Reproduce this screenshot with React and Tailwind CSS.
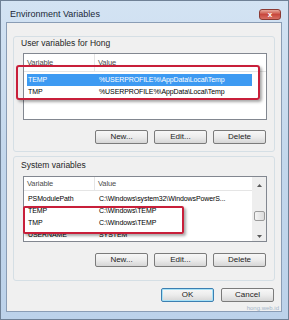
const userRows = [
  { name: 'TEMP', value: '%USERPROFILE%\\AppData\\Local\\Temp', selected: true },
  { name: 'TMP', value: '%USERPROFILE%\\AppData\\Local\\Temp' },
];

const systemRows = [
  { name: 'PSModulePath', value: 'C:\\Windows\\system32\\WindowsPowerS...' },
  { name: 'TEMP', value: 'C:\\Windows\\TEMP' },
  { name: 'TMP', value: 'C:\\Windows\\TEMP' },
  { name: 'USERNAME', value: 'SYSTEM' },
];

function Button({ children, primary }) {
  return (
    <div
      className={`w-[53px] h-[14px] flex items-center justify-center rounded-[2px] border text-[8px] text-[#222] bg-gradient-to-b from-[#f7f7f7] via-[#ececec] to-[#d6d6d6] ${
        primary ? 'border-[#3c7fb1] shadow-[inset_0_0_0_1px_#a8e2f7]' : 'border-[#7b7b7b]'
      }`}
    >
      {children}
    </div>
  );
}

function Arrow({ down }) {
  return (
    <svg width="5" height="3" viewBox="0 0 5 3">
      <path d={down ? 'M0 0 L5 0 L2.5 3 Z' : 'M0 3 L5 3 L2.5 0 Z'} fill="#5a5a5a" />
    </svg>
  );
}

function VarList({ rows, height, scrollbar }) {
  return (
    <div className={`flex border border-[#828790] bg-white text-[7px] tracking-[-0.1px] ${height}`}>
      <div className="flex-1 flex flex-col">
        <div className="flex h-[18px] border-b border-[#e5e5e5] text-[#4c4c4c] text-[7.5px]">
          <div className="w-[71px] pl-[3px] flex items-center border-r border-[#e5e5e5]">Variable</div>
          <div className="pl-[3px] flex items-center">Value</div>
        </div>
        <div className="pt-[2px] flex flex-col">
          {rows.map((r) => (
            <div
              key={r.name}
              className={`ml-[3px] w-[225px] h-[12px] flex items-center whitespace-nowrap ${
                r.selected ? 'bg-[#3d9af2] text-white' : 'text-black'
              }`}
            >
              <div className="w-[72px] pl-[1px]">{r.name}</div>
              <div>{r.value}</div>
            </div>
          ))}
        </div>
      </div>
      {scrollbar && (
        <div className="w-[14px] bg-[#eeeeee] flex flex-col items-center">
          <div className="h-[17px] flex items-center justify-center">
            <Arrow />
          </div>
          <div className="mt-[17px] w-[11px] h-[10px] rounded-[2px] border border-[#9b9b9b] bg-gradient-to-r from-[#f4f4f4] to-[#dcdcdc]" />
          <div className="flex-1" />
          <div className="h-[10px] flex items-center justify-center">
            <Arrow down />
          </div>
        </div>
      )}
    </div>
  );
}

export default function App() {
  return (
    <div className="relative w-[289px] h-[320px] overflow-hidden flex flex-col border border-[#6f8196] bg-gradient-to-b from-[#d3e3f3] via-[#c3d7ec] to-[#bcd2ea] font-['Liberation_Sans',Arial,sans-serif] text-[8px] text-black">
      {/* title bar */}
      <div className="h-[21px] flex items-center justify-between pt-[6px] pl-[9px] pr-[7px]">
        <span className="text-[9px] text-[#1b2838]">Environment Variables</span>
        <div className="w-[22px] h-[11px] rounded-[3px] border border-[#8c3b34] bg-gradient-to-b from-[#e6a89c] via-[#c8483e] to-[#d66e62] flex items-center justify-center text-white text-[8px] font-bold leading-none">
          x
        </div>
      </div>

      {/* client area */}
      <div className="ml-[5px] mr-[6px] h-[290px] border border-[#8a9db5] bg-[#f0f0f0] flex flex-col px-[6px] pt-[13px]">
        <div className="border border-[#d5dfe5] rounded-[3px] pt-[1px] pb-[7px] flex flex-col">
          <div className="pl-[7px] h-[11px] leading-[11px] text-[8.5px] text-[#1e1e1e]">User variables for Hong</div>
          <div className="ml-[9px] mr-[7px] mt-[4px]">
            <VarList rows={userRows} height="h-[67px]" />
          </div>
          <div className="mt-[10px] mr-[8px] flex justify-end gap-[6px]">
            <Button>New...</Button>
            <Button>Edit...</Button>
            <Button>Delete</Button>
          </div>
        </div>

        <div className="mt-[4px] border border-[#d5dfe5] rounded-[3px] pt-[3px] pb-[13px] flex flex-col">
          <div className="pl-[7px] h-[11px] leading-[11px] text-[8.5px] text-[#1e1e1e]">System variables</div>
          <div className="ml-[9px] mr-[7px] mt-[5px]">
            <VarList rows={systemRows} height="h-[66px]" scrollbar />
          </div>
          <div className="mt-[11px] mr-[8px] flex justify-end gap-[6px]">
            <Button>New...</Button>
            <Button>Edit...</Button>
            <Button>Delete</Button>
          </div>
        </div>

        <div className="mt-[7px] mr-[1px] flex justify-end gap-[7px]">
          <Button primary>OK</Button>
          <Button>Cancel</Button>
        </div>
      </div>

      {/* annotations */}
      <div className="absolute left-[15px] top-[64px] w-[244px] h-[35px] rounded-[3px] border-2 border-[#c81f3a] shadow-[2px_2px_3px_rgba(0,0,0,0.35)]" />
      <div className="absolute left-[22px] top-[205px] w-[161px] h-[28px] rounded-[2px] border-2 border-[#c81f3a] shadow-[2px_2px_3px_rgba(0,0,0,0.35)]" />
      <div className="absolute right-[9px] top-[303px] text-[6px] text-[#a3b6ca]">hong.web.id</div>
    </div>
  );
}
